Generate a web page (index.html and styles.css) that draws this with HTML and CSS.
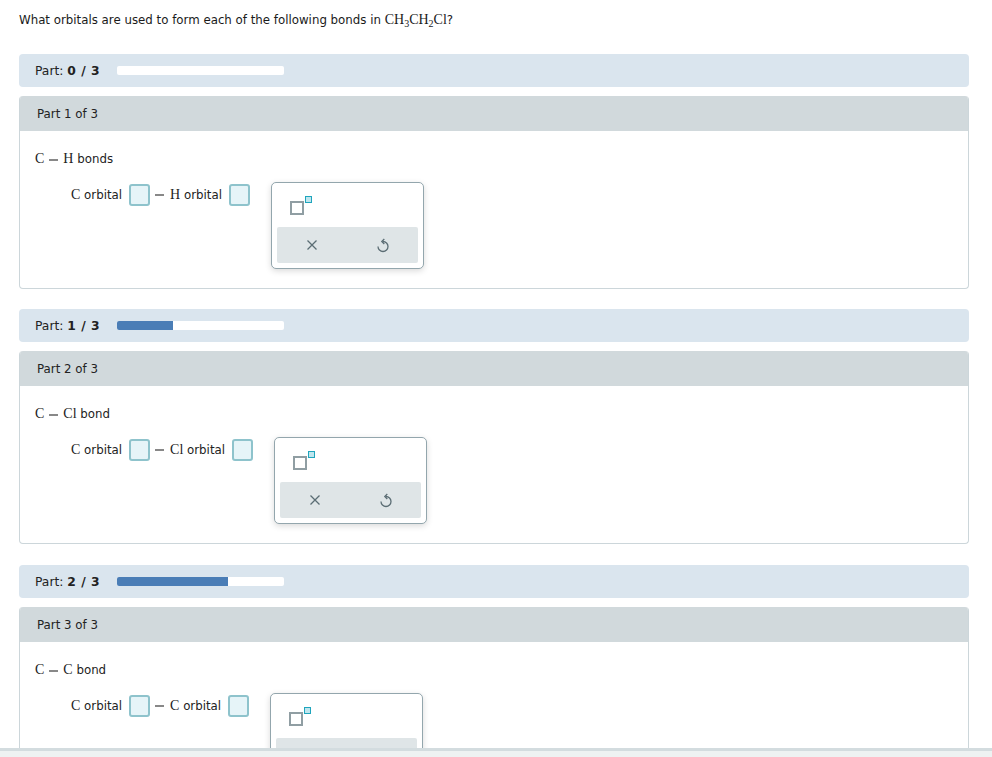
FILE: index.html
```html
<!DOCTYPE html>
<html>
<head>
<meta charset="utf-8">
<link rel="stylesheet" href="styles.css">
</head>
<body>
<div class="page">
  <p class="question">What orbitals are used to form each of the following bonds in <span class="math">CH<sub>3</sub>CH<sub>2</sub>Cl</span>?</p>

  <div class="partbar">
    <span class="partlabel">Part: <b>0 / 3</b></span>
    <div class="progress"><div class="fill" style="width:0%"></div></div>
  </div>
  <div class="card card-first">
    <div class="card-head">Part 1 of 3</div>
    <div class="card-body">
      <div class="bond"><span class="math">C</span><span class="dash"></span><span class="math">H</span> bonds</div>
      <div class="row">
        <div class="fields">
          <span><span class="math">C</span> orbital</span>
          <span class="box"></span>
          <span class="dash"></span>
          <span><span class="math">H</span> orbital</span>
          <span class="box"></span>
        </div>
        <div class="pop">
          <div class="pop-top">
            <span class="ico-sup"><span class="sq-big"></span><span class="sq-small"></span></span>
          </div>
          <div class="pop-bar">
            <svg class="ico" width="12" height="12" viewBox="0 0 12 12"><path d="M1.5 1.5l9 9M10.5 1.5l-9 9" stroke="#5b6d74" stroke-width="1.3" fill="none"/></svg>
            <svg class="ico" width="14" height="16" viewBox="0 0 14 16"><path d="M7 4.5A5 5 0 1 1 2 9.5" stroke="#5b6d74" stroke-width="1.3" fill="none"/><path d="M8.3 2L5.8 4.5L8.3 7" stroke="#5b6d74" stroke-width="1.3" fill="none"/></svg>
          </div>
        </div>
      </div>
    </div>
  </div>

  <div class="partbar">
    <span class="partlabel">Part: <b>1 / 3</b></span>
    <div class="progress"><div class="fill" style="width:33.3%"></div></div>
  </div>
  <div class="card">
    <div class="card-head">Part 2 of 3</div>
    <div class="card-body">
      <div class="bond"><span class="math">C</span><span class="dash"></span><span class="math">Cl</span> bond</div>
      <div class="row">
        <div class="fields">
          <span><span class="math">C</span> orbital</span>
          <span class="box"></span>
          <span class="dash"></span>
          <span><span class="math">Cl</span> orbital</span>
          <span class="box"></span>
        </div>
        <div class="pop">
          <div class="pop-top">
            <span class="ico-sup"><span class="sq-big"></span><span class="sq-small"></span></span>
          </div>
          <div class="pop-bar">
            <svg class="ico" width="12" height="12" viewBox="0 0 12 12"><path d="M1.5 1.5l9 9M10.5 1.5l-9 9" stroke="#5b6d74" stroke-width="1.3" fill="none"/></svg>
            <svg class="ico" width="14" height="16" viewBox="0 0 14 16"><path d="M7 4.5A5 5 0 1 1 2 9.5" stroke="#5b6d74" stroke-width="1.3" fill="none"/><path d="M8.3 2L5.8 4.5L8.3 7" stroke="#5b6d74" stroke-width="1.3" fill="none"/></svg>
          </div>
        </div>
      </div>
    </div>
  </div>

  <div class="partbar">
    <span class="partlabel">Part: <b>2 / 3</b></span>
    <div class="progress"><div class="fill" style="width:66.7%"></div></div>
  </div>
  <div class="card">
    <div class="card-head">Part 3 of 3</div>
    <div class="card-body">
      <div class="bond"><span class="math">C</span><span class="dash"></span><span class="math">C</span> bond</div>
      <div class="row">
        <div class="fields">
          <span><span class="math">C</span> orbital</span>
          <span class="box"></span>
          <span class="dash"></span>
          <span><span class="math">C</span> orbital</span>
          <span class="box"></span>
        </div>
        <div class="pop">
          <div class="pop-top">
            <span class="ico-sup"><span class="sq-big"></span><span class="sq-small"></span></span>
          </div>
          <div class="pop-bar">
            <svg class="ico" width="12" height="12" viewBox="0 0 12 12"><path d="M1.5 1.5l9 9M10.5 1.5l-9 9" stroke="#5b6d74" stroke-width="1.3" fill="none"/></svg>
            <svg class="ico" width="14" height="16" viewBox="0 0 14 16"><path d="M7 4.5A5 5 0 1 1 2 9.5" stroke="#5b6d74" stroke-width="1.3" fill="none"/><path d="M8.3 2L5.8 4.5L8.3 7" stroke="#5b6d74" stroke-width="1.3" fill="none"/></svg>
          </div>
        </div>
      </div>
    </div>
  </div>
</div>
<div class="footer"></div>
</body>
</html>
```

FILE: styles.css
```css
html, body {
  margin: 0;
  padding: 0;
  background: #fff;
}
body {
  font-family: "DejaVu Sans", sans-serif;
  font-size: 11.8px;
  color: #222;
  overflow: hidden;
  height: 757px;
}
.page {
  padding: 12px 23px 40px 19px;
}
.question {
  margin: 0 0 26px 0;
  line-height: 16px;
  color: #1a1a1a;
}
.math {
  font-family: "Liberation Serif", "DejaVu Serif", serif;
  font-size: 14px;
}
.math sub {
  font-size: 10px;
  vertical-align: -3px;
  line-height: 0;
}
.partbar {
  height: 33px;
  background: #dae5ee;
  border-radius: 4px;
  display: flex;
  align-items: center;
  padding-left: 16px;
}
.partlabel {
  width: 82px;
  font-size: 12.3px;
  color: #222;
}
.partlabel b {
  font-weight: bold;
  letter-spacing: 0.5px;
}
.progress {
  width: 167px;
  height: 9px;
  background: #fff;
  border-radius: 2px;
  overflow: hidden;
}
.fill {
  height: 100%;
  background: #4a7db6;
}
.card {
  margin-top: 9px;
  border: 1px solid #ccd6da;
  border-top: none;
  border-radius: 4px;
  overflow: hidden;
  margin-bottom: 21px;
}
.card-first {
  margin-bottom: 20px;
}
.card-head {
  height: 35px;
  background: #d1d9dc;
  display: flex;
  align-items: center;
  padding-left: 17px;
  padding-top: 1px;
  box-sizing: border-box;
  color: #222;
}
.card-body {
  padding: 19px 15px 17px 15px;
  height: 121px;
}
.bond {
  height: 18px;
  line-height: 18px;
  color: #222;
}
.dash {
  display: inline-block;
  width: 9px;
  height: 2px;
  background: #888;
  margin: 0 5px;
  vertical-align: middle;
}
.row {
  display: flex;
  align-items: flex-start;
  margin-top: 16px;
  margin-left: 36px;
  color: #222;
}
.fields {
  display: flex;
  align-items: center;
  height: 22px;
}
.fields .dash {
  margin: 0 6px 0 0;
}
.box {
  display: inline-block;
  width: 17px;
  height: 18px;
  border: 2px solid #8ec3cc;
  background: #e6f4f8;
  border-radius: 3px;
  margin: 0 5px 0 7px;
}
.pop {
  margin-left: 16px;
  margin-top: -2px;
  width: 151px;
  height: 85px;
  border: 1px solid #93a6ad;
  border-radius: 5px;
  box-shadow: 0 2px 6px rgba(0,0,0,0.15);
  background: #fff;
  display: flex;
  flex-direction: column;
}
.pop-top {
  height: 45px;
  position: relative;
}
.ico-sup {
  position: absolute;
  left: 18px;
  top: 13px;
  width: 22px;
  height: 19px;
}
.sq-big {
  position: absolute;
  left: 0;
  bottom: 0;
  width: 10px;
  height: 10px;
  border: 2px solid #909ea3;
  background: #fff;
}
.sq-small {
  position: absolute;
  right: 0;
  top: 0;
  width: 5px;
  height: 5px;
  border: 1.5px solid #1fa5bd;
  background: #bfe6ee;
}
.pop-bar {
  margin: 0 5px 5px 5px;
  height: 36px;
  background: #dfe5e7;
  border-radius: 2px;
  display: flex;
  align-items: center;
  justify-content: space-between;
  padding: 0 28px 0 29px;
}
.ico {
  display: block;
}
.footer {
  position: fixed;
  left: 0;
  right: 0;
  bottom: 0;
  height: 6px;
  background: #eef2f2;
  border-top: 3px solid #d3dcdf;
}
```
